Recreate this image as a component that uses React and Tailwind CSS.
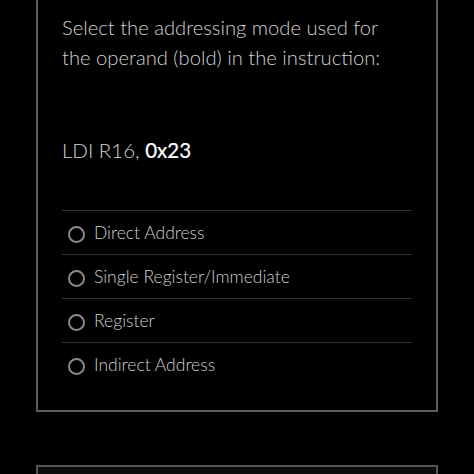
const options = ["Direct Address", "Single Register/Immediate", "Register", "Indirect Address"]

const App = () => {
  return (
    <div className="min-h-[474px] h-[474px] overflow-hidden bg-black px-[36px] font-['Lato',sans-serif]">
      <div className="border-x-2 border-b-2 border-[#5c5c5c] px-[24px] pt-[12px] pb-[24px]">
        <p className="max-w-[330px] text-[20.2px] leading-[30px] font-light text-[#d2d2d2]">
          Select the addressing mode used for the operand (bold) in the instruction:
        </p>
        <p className="mt-[63px] text-[20.5px] leading-[30px] font-light text-[#d2d2d2]">
          LDI R16, <span className="font-normal text-white [-webkit-text-stroke:0.2px_white]">0x23</span>
        </p>
        <div className="mt-[45px]">
          {options.map((opt) => (
            <label key={opt} className="flex h-[44px] items-center gap-[9px] border-t border-[#333] pl-[6px]">
              <span className="h-[17px] w-[17px] shrink-0 rounded-full border-2 border-[#8a8a8a] mt-[3px]" />
              <span className="mt-[2px] text-[17.5px] font-light text-[#cfcfcf]">{opt}</span>
            </label>
          ))}
        </div>
      </div>
      <div className="mt-[53px] h-[60px] border-2 border-[#555] bg-[#0c0c0c]" />
    </div>
  )
}

export default App
